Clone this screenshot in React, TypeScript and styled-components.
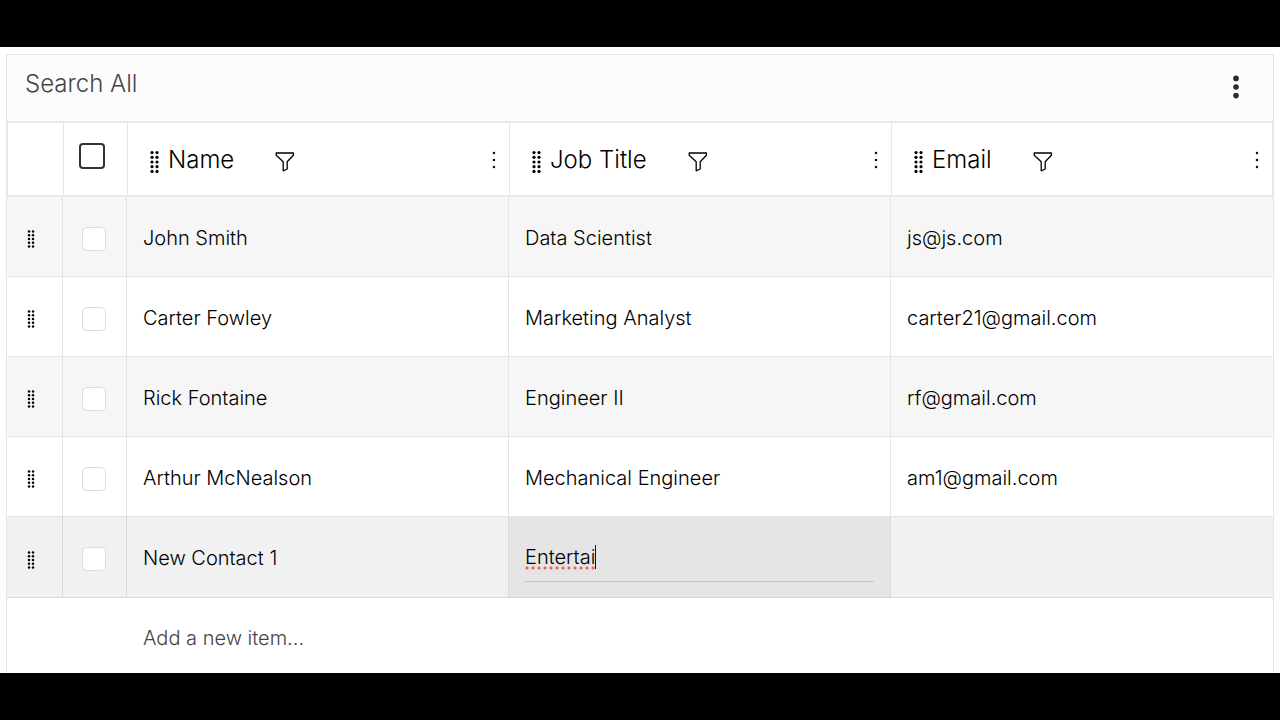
import React from "react";
import styled, { createGlobalStyle } from "styled-components";

const GlobalStyle = createGlobalStyle`
  *, *::before, *::after { box-sizing: border-box; }
  body {
    margin: 0;
    background: #000;
    color: #000;
    font-family: Inter, "Liberation Sans", sans-serif;
    font-weight: 300;
  }
  input, button {
    margin: 0;
    padding: 0;
    border: 0;
    background: transparent;
    color: inherit;
    font: inherit;
  }
  svg { display: block; }
`;

const Stage = styled.div`
  display: flex;
  flex-direction: column;
  min-height: 100vh;
  padding: 47px 0;
`;

const Page = styled.main`
  display: flex;
  flex: 1;
  flex-direction: column;
  padding: 7px 6px 0;
  background: #fff;
`;

const Panel = styled.section`
  flex: 1;
  border: 1px solid #e6e6e6;
  border-bottom: 0;
`;

const Toolbar = styled.div`
  display: flex;
  align-items: flex-start;
  justify-content: space-between;
  height: 68px;
  padding: 13px 31px 0 18px;
  border-bottom: 2px solid #e9e9e9;
  background: #fcfcfc;
`;

const SearchInput = styled.input`
  flex: 1;
  height: 32px;
  outline: none;
  font-size: 24px;
  line-height: 32px;
  &::placeholder { color: #444446; opacity: 1; }
`;

const IconButton = styled.button<{ $height: number }>`
  display: flex;
  align-items: center;
  justify-content: center;
  height: ${(p) => p.$height}px;
  flex: none;
`;

const Table = styled.table`
  width: 100%;
  table-layout: fixed;
  border-collapse: separate;
  border-spacing: 0;
`;

const GripCol = styled.col`
  width: 56px;
`;

const CheckCol = styled.col`
  width: 64px;
`;

const HeadCell = styled.th`
  height: 74px;
  padding: 0;
  border-left: 1px solid #e8e8e8;
  border-bottom: 2px solid #e9e9e9;
  background: #fff;
  font-weight: inherit;
  text-align: left;
  &:last-child { border-right: 1px solid #e8e8e8; }
`;

const HeadContent = styled.div`
  display: flex;
  align-items: center;
  padding: 2px 9px 0 21px;
`;

const HeadGrip = styled.span`
  padding: 4px 8px 0 0;
`;

const HeadLabel = styled.span`
  flex: none;
  margin-right: 41px;
  font-size: 24px;
  line-height: 32px;
`;

const Spacer = styled.span`
  flex: 1;
`;

type Tone = "shaded" | "plain" | "active";

const toneColor: Record<Tone, string> = {
  shaded: "#f6f6f6",
  plain: "#ffffff",
  active: "#f1f1f1",
};

const Row = styled.tr<{ $tone: Tone }>`
  height: ${(p) => (p.$tone === "active" ? 81 : 80)}px;
  background: ${(p) => toneColor[p.$tone]};
  --line: ${(p) => (p.$tone === "active" ? "#d9d9d9" : "#e4e4e4")};
`;

const Cell = styled.td<{ $editing?: boolean }>`
  padding: 2px 16px 0;
  border-right: 1px solid var(--line);
  border-bottom: 1px solid var(--line);
  background: ${(p) => (p.$editing ? "#e5e5e5" : "transparent")};
  font-size: 20px;
  line-height: 28px;
  &:last-child { border-right: 0; }
`;

const Centered = styled.div`
  display: flex;
  justify-content: center;
`;

const GripSlot = styled.div`
  display: flex;
  padding: 3px 0 0 3px;
`;

const Checkbox = styled.input<{ $header?: boolean }>`
  appearance: none;
  display: block;
  width: ${(p) => (p.$header ? 26 : 24)}px;
  height: ${(p) => (p.$header ? 26 : 24)}px;
  margin: ${(p) => (p.$header ? "0 7px 7px 0" : "2px 1px 0 0")};
  border: ${(p) => (p.$header ? "2px solid #333" : "1px solid #dcdcdf")};
  border-radius: ${(p) => (p.$header ? 4 : 5)}px;
  background: #fff;
`;

const EditLine = styled.div`
  display: flex;
  height: 48px;
  padding-top: 9px;
  border-bottom: 1px solid #c4c4c4;
`;

const Word = styled.span`
  position: relative;
  display: inline-flex;
  height: 28px;
  &::before {
    content: "";
    position: absolute;
    top: 2px;
    right: 0;
    width: 1px;
    height: 24px;
    background: #111;
  }
  &::after {
    content: "";
    position: absolute;
    left: 0;
    right: 0;
    bottom: 1px;
    height: 4px;
    background: radial-gradient(circle at center, #ee5f5b 1px, transparent 2px) -1px 0 / 6px 4px repeat-x;
  }
`;

const EditInput = styled.input`
  field-sizing: content;
  height: 28px;
  padding-right: 1px;
  outline: none;
  line-height: 28px;
`;

const NewItemInput = styled.input`
  display: block;
  width: 100%;
  height: 28px;
  outline: none;
  line-height: 28px;
  &::placeholder { color: #444446; opacity: 1; }
`;

const NewCell = styled.td`
  height: 74px;
  padding: 6px 16px 0;
  font-size: 20px;
  vertical-align: middle;
`;

function Grip({ large = false }: { large?: boolean }) {
  const xs = large ? [3, 8] : [3, 7];
  const step = large ? 4.7 : 3.8;
  const r = large ? 1.6 : 1.25;
  return (
    <svg width={large ? 11 : 10} height={large ? 24 : 20} fill="#000" aria-hidden="true">
      {xs.map((x) =>
        [-2, -1, 0, 1, 2].map((n) => (
          <circle key={`${x}:${n}`} cx={x} cy={(large ? 12 : 10) + n * step} r={r} />
        ))
      )}
    </svg>
  );
}

function FilterIcon() {
  return (
    <svg width="20" height="20" fill="none" stroke="#000" strokeWidth="1.3" strokeLinejoin="round" aria-hidden="true">
      <path d="M1.2 1H18.4V3.2L12.2 9.8V17L8.2 18.8V9.8L1.2 3.2Z" />
    </svg>
  );
}

function Kebab({ large = false }: { large?: boolean }) {
  const step = large ? 8.6 : 6.9;
  return (
    <svg width="12" height="26" fill={large ? "#2b2b2b" : "#111"} aria-hidden="true">
      {[-1, 0, 1].map((n) => (
        <circle key={n} cx="6" cy={13 + n * step} r={large ? 2.8 : 1.25} />
      ))}
    </svg>
  );
}

const FilterButton = styled(IconButton)`
  padding-top: 4px;
`;

const columns = ["Name", "Job Title", "Email"];

const contacts = [
  { name: "John Smith", title: "Data Scientist", email: "js@js.com" },
  { name: "Carter Fowley", title: "Marketing Analyst", email: "carter21@gmail.com" },
  { name: "Rick Fontaine", title: "Engineer II", email: "rf@gmail.com" },
  { name: "Arthur McNealson", title: "Mechanical Engineer", email: "am1@gmail.com" },
];

function RowControls({ name }: { name: string }) {
  return (
    <>
      <Cell>
        <GripSlot>
          <Grip />
        </GripSlot>
      </Cell>
      <Cell>
        <Centered>
          <Checkbox type="checkbox" aria-label={`Select ${name}`} />
        </Centered>
      </Cell>
    </>
  );
}

export default function App() {
  return (
    <Stage>
      <GlobalStyle />
      <Page>
        <Panel>
          <Toolbar>
            <SearchInput type="text" placeholder="Search All" aria-label="Search All" />
            <IconButton type="button" $height={38} aria-label="Table options">
              <Kebab large />
            </IconButton>
          </Toolbar>
          <Table>
            <colgroup>
              <GripCol />
              <CheckCol />
              <col />
              <col />
              <col />
            </colgroup>
            <thead>
              <tr>
                <HeadCell aria-label="Reorder" />
                <HeadCell>
                  <Centered>
                    <Checkbox type="checkbox" $header aria-label="Select all" />
                  </Centered>
                </HeadCell>
                {columns.map((label) => (
                  <HeadCell key={label} scope="col">
                    <HeadContent>
                      <HeadGrip>
                        <Grip large />
                      </HeadGrip>
                      <HeadLabel>{label}</HeadLabel>
                      <FilterButton type="button" $height={26} aria-label={`Filter ${label}`}>
                        <FilterIcon />
                      </FilterButton>
                      <Spacer />
                      <IconButton type="button" $height={26} aria-label={`${label} options`}>
                        <Kebab />
                      </IconButton>
                    </HeadContent>
                  </HeadCell>
                ))}
              </tr>
            </thead>
            <tbody>
              {contacts.map((c, i) => (
                <Row key={c.name} $tone={i % 2 === 0 ? "shaded" : "plain"}>
                  <RowControls name={c.name} />
                  <Cell>{c.name}</Cell>
                  <Cell>{c.title}</Cell>
                  <Cell>{c.email}</Cell>
                </Row>
              ))}
              <Row $tone="active">
                <RowControls name="New Contact 1" />
                <Cell>New Contact 1</Cell>
                <Cell $editing>
                  <EditLine>
                    <Word>
                      <EditInput type="text" defaultValue="Entertai" aria-label="Job Title" />
                    </Word>
                  </EditLine>
                </Cell>
                <Cell />
              </Row>
            </tbody>
            <tfoot>
              <tr>
                <td colSpan={2} />
                <NewCell colSpan={3}>
                  <NewItemInput type="text" placeholder="Add a new item..." aria-label="Add a new item" />
                </NewCell>
              </tr>
            </tfoot>
          </Table>
        </Panel>
      </Page>
    </Stage>
  );
}
